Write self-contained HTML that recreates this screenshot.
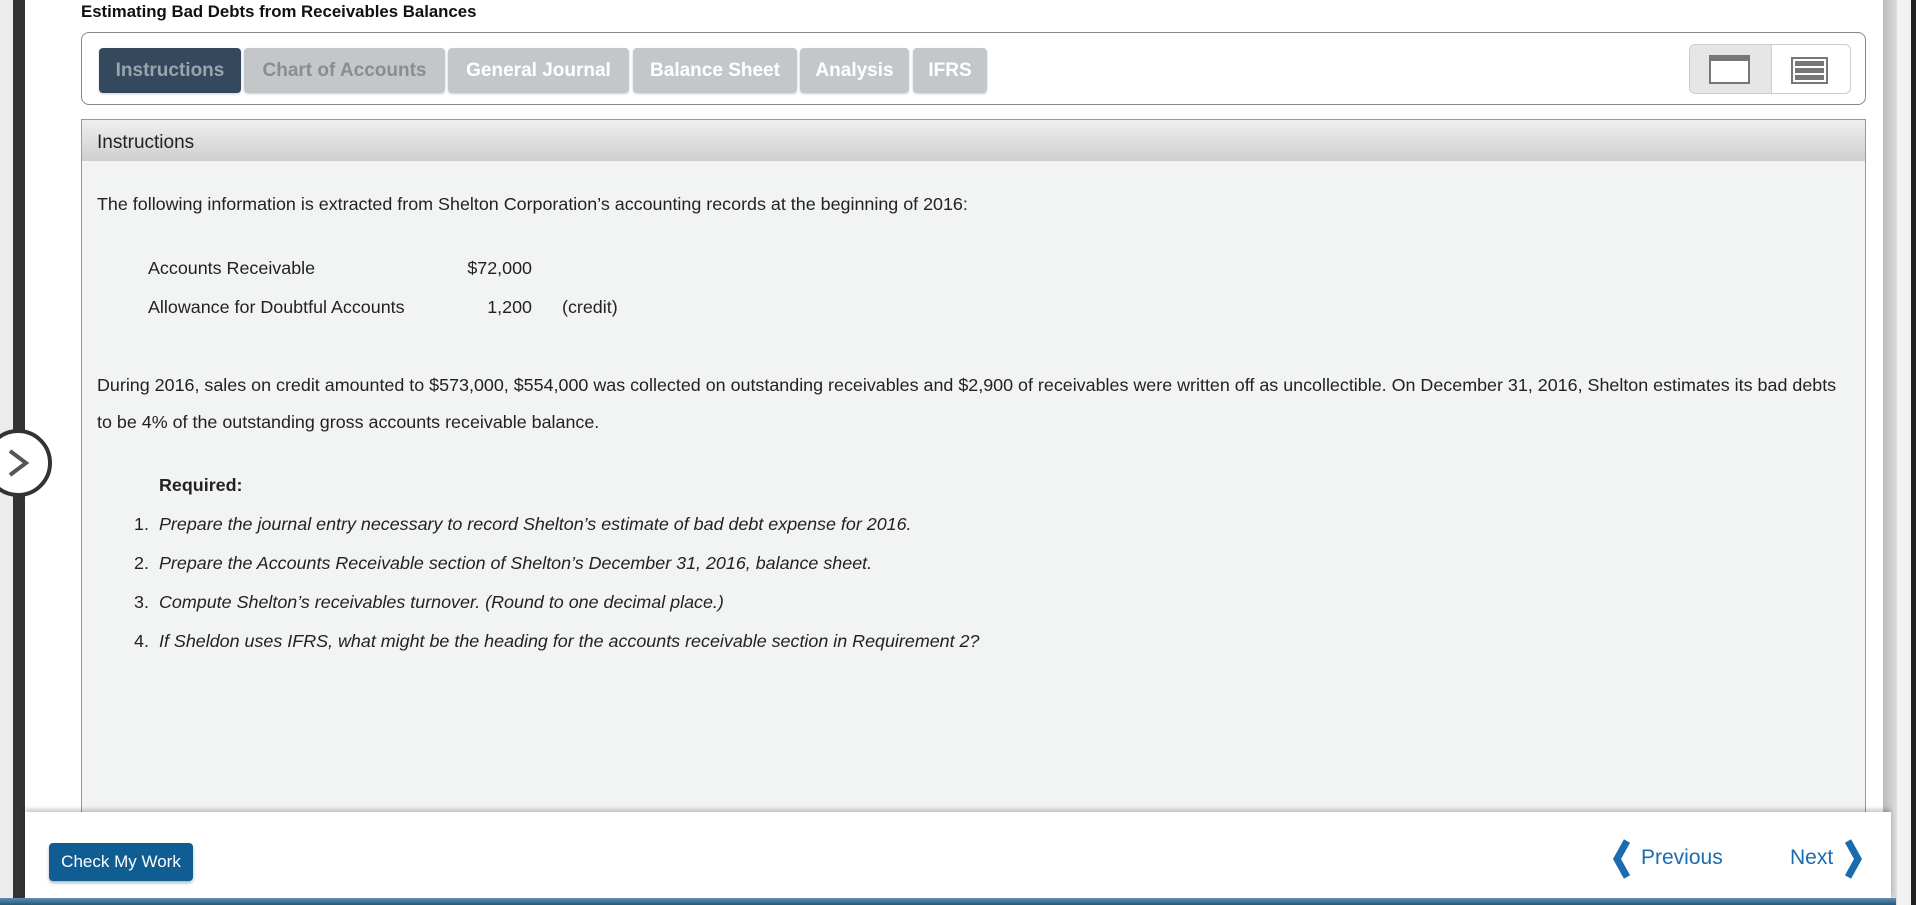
<!DOCTYPE html>
<html><head><meta charset="utf-8"><style>
*{margin:0;padding:0;box-sizing:border-box}
body{width:1916px;height:905px;overflow:hidden;background:#fff;font-family:"Liberation Sans",Arial,sans-serif;color:#222;position:relative}
.abs{position:absolute}
.lbar{left:0;top:0;width:13px;height:905px;background:#ececec}
.dbar{left:13px;top:0;width:12px;height:905px;background:#333}
.title{left:81px;top:2px;font-size:16.8px;font-weight:bold;color:#111}
.tabbox{left:81px;top:32px;width:1785px;height:73px;border:1px solid #888;border-radius:8px}
.tab{top:48px;height:45px;border-radius:4px;background:#c4c7ca;color:#fff;font-weight:bold;font-size:19px;line-height:45px;text-align:center;box-shadow:0 1px 2px rgba(0,0,0,.2)}
.toggle{left:1689px;top:44px;width:162px;height:50px;border:1px solid #ccc;border-radius:6px;overflow:hidden}
.panel{left:81px;top:119px;width:1785px;height:700px;border:1px solid #999;background:#f2f3f3}
.phead{height:41px;background:linear-gradient(#efefef,#cfcfcf);font-size:19px;line-height:46px;padding-left:15px;color:#222}
.t{font-size:17.9px;color:#222;white-space:nowrap}
.i{font-style:italic}
.footer{left:25px;top:812px;width:1866px;height:86px;background:#fff;box-shadow:0 -3px 4px rgba(0,0,0,.2)}
.bot{left:0;top:898px;width:1896px;height:7px;background:linear-gradient(#5b8fb5,#2a5674)}
.btn{left:49px;top:843px;width:144px;height:38px;background:#0f5d93;border-radius:4px;color:#fff;font-size:17px;line-height:38px;text-align:center;box-shadow:0 2px 3px rgba(0,0,0,.3)}
.nav{color:#1a6bb0;font-size:21px}
</style></head><body>
<div class="abs lbar"></div>
<div class="abs dbar"></div>
<div class="abs" style="left:1883px;top:0;width:14px;height:905px;background:linear-gradient(90deg,#bbb,#ddd)"></div>
<div class="abs" style="left:1897px;top:0;width:14px;height:905px;background:#f2f2f2"></div>
<div class="abs" style="left:1911px;top:0;width:5px;height:905px;background:#222"></div>
<div class="abs title">Estimating Bad Debts from Receivables Balances</div>
<div class="abs tabbox"></div>
<div class="abs tab" style="left:99px;width:142px;background:#34495e;color:#9aa4ad">Instructions</div>
<div class="abs tab" style="left:244px;width:201px;color:#888d92">Chart of Accounts</div>
<div class="abs tab" style="left:448px;width:181px">General Journal</div>
<div class="abs tab" style="left:633px;width:164px">Balance Sheet</div>
<div class="abs tab" style="left:800px;width:109px">Analysis</div>
<div class="abs tab" style="left:913px;width:74px">IFRS</div>
<div class="abs toggle">
 <div class="abs" style="left:0;top:0;width:82px;height:50px;background:#e6e6e6;border-right:1px solid #ccc"></div>
 <div class="abs" style="left:19px;top:10px;width:41px;height:29px;border:2px solid #777;border-top:6px solid #777;background:#fff"></div>
 <div class="abs" style="left:101px;top:12px;width:37px;height:27px;border:2px solid #777;background:#fff;padding:2px"><div style="height:5px;background:#777;margin-bottom:2px"></div><div style="height:5px;background:#777;margin-bottom:2px"></div><div style="height:5px;background:#777"></div></div>
</div>
<div class="abs panel"><div class="phead">Instructions</div></div>
<div class="abs t" style="left:97px;top:194px">The following information is extracted from Shelton Corporation’s accounting records at the beginning of 2016:</div>
<div class="abs t" style="left:148px;top:258px">Accounts Receivable</div>
<div class="abs t" style="left:432px;top:258px;width:100px;text-align:right">$72,000</div>
<div class="abs t" style="left:148px;top:297px">Allowance for Doubtful Accounts</div>
<div class="abs t" style="left:432px;top:297px;width:100px;text-align:right">1,200</div>
<div class="abs t" style="left:562px;top:297px">(credit)</div>
<div class="abs t" style="left:97px;top:375px">During 2016, sales on credit amounted to $573,000, $554,000 was collected on outstanding receivables and $2,900 of receivables were written off as uncollectible. On December 31, 2016, Shelton estimates its bad debts</div>
<div class="abs t" style="left:97px;top:412px">to be 4% of the outstanding gross accounts receivable balance.</div>
<div class="abs t" style="left:159px;top:475px;font-weight:bold">Required:</div>
<div class="abs t" style="left:134px;top:514px">1.</div><div class="abs t i" style="left:159px;top:514px">Prepare the journal entry necessary to record Shelton’s estimate of bad debt expense for 2016.</div>
<div class="abs t" style="left:134px;top:553px">2.</div><div class="abs t i" style="left:159px;top:553px">Prepare the Accounts Receivable section of Shelton’s December 31, 2016, balance sheet.</div>
<div class="abs t" style="left:134px;top:592px">3.</div><div class="abs t i" style="left:159px;top:592px">Compute Shelton’s receivables turnover. (Round to one decimal place.)</div>
<div class="abs t" style="left:134px;top:631px">4.</div><div class="abs t i" style="left:159px;top:631px">If Sheldon uses IFRS, what might be the heading for the accounts receivable section in Requirement 2?</div>
<svg class="abs" style="left:-18px;top:427px" width="72" height="72"><circle cx="36" cy="36" r="32" fill="#fff" stroke="#333" stroke-width="4"/><path d="M28 24 L44 36 L28 48" fill="none" stroke="#555" stroke-width="4"/></svg>
<div class="abs footer"></div>
<div class="abs bot"></div>
<div class="abs btn">Check My Work</div>
<svg class="abs" style="left:1609px;top:838px" width="24" height="42"><path d="M18 3 L8 21 L18 39" fill="none" stroke="#1a6bb0" stroke-width="7"/></svg>
<div class="abs nav" style="left:1641px;top:846px">Previous</div>
<div class="abs nav" style="left:1790px;top:846px">Next</div>
<svg class="abs" style="left:1842px;top:838px" width="24" height="42"><path d="M6 3 L16 21 L6 39" fill="none" stroke="#1a6bb0" stroke-width="7"/></svg>
</body></html>
